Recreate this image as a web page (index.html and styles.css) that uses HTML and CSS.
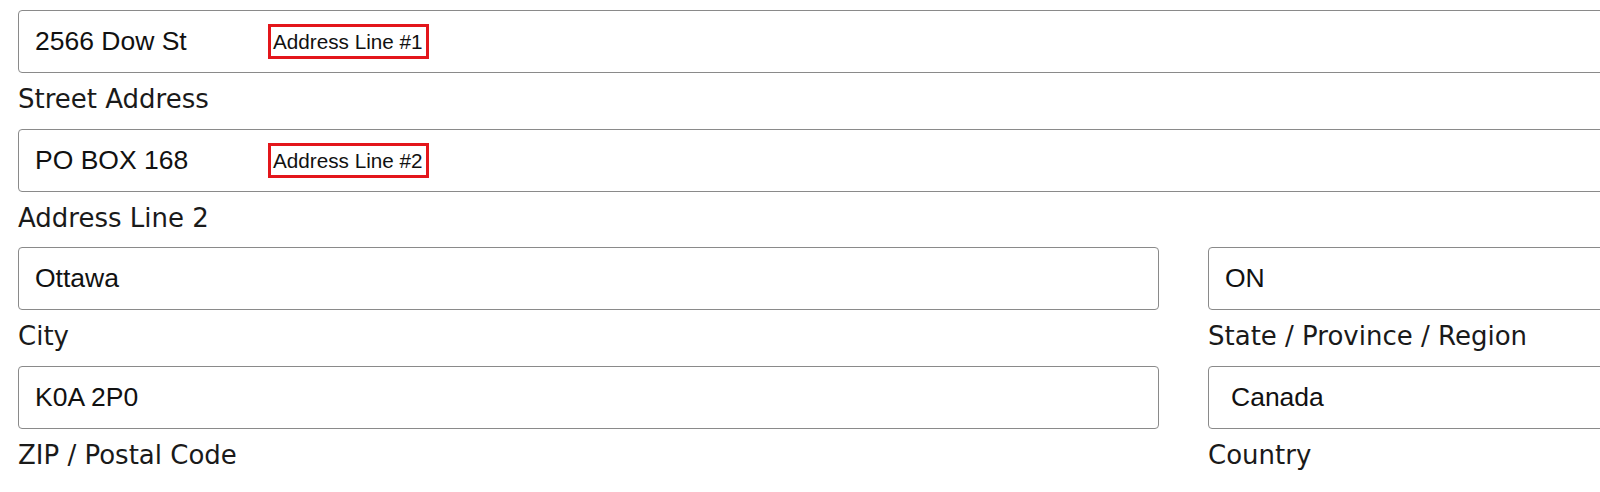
FILE: index.html
```html
<!DOCTYPE html>
<html lang="en">
<head>
<meta charset="utf-8">
<title>Address</title>
<link rel="stylesheet" href="styles.css">
</head>
<body>
<form class="address">
  <div class="field span2">
    <div class="input"><span class="value">2566 Dow St</span><span class="note">Address Line #1</span></div>
    <label class="label">Street Address</label>
  </div>
  <div class="field span2">
    <div class="input"><span class="value">PO BOX 168</span><span class="note">Address Line #2</span></div>
    <label class="label">Address Line 2</label>
  </div>
  <div class="field">
    <div class="input"><span class="value">Ottawa</span></div>
    <label class="label">City</label>
  </div>
  <div class="field">
    <div class="input"><span class="value">ON</span></div>
    <label class="label">State / Province / Region</label>
  </div>
  <div class="field">
    <div class="input"><span class="value">K0A 2P0</span></div>
    <label class="label">ZIP / Postal Code</label>
  </div>
  <div class="field">
    <div class="input select"><span class="value">Canada</span></div>
    <label class="label">Country</label>
  </div>
</form>
</body>
</html>
```
FILE: styles.css
```css
html, body {
  margin: 0;
  padding: 0;
  background: #ffffff;
  overflow: hidden;
}
.address {
  display: grid;
  grid-template-columns: 1141px 1141px;
  column-gap: 49px;
  padding: 10px 0 0 18px;
  width: 2331px;
}
.field {
  display: flex;
  flex-direction: column;
  height: 118.5px;
}
.span2 {
  grid-column: span 2;
}
.input {
  box-sizing: border-box;
  height: 63px;
  border: 1px solid #8a8a8a;
  border-radius: 4px;
  display: flex;
  align-items: center;
  padding: 0 16px;
  font-family: "Liberation Sans", Arial, sans-serif;
  font-size: 26.5px;
  color: #111;
}
.select {
  padding-left: 22px;
}
.value {
  flex: 0 0 auto;
}
.input .value:not(:only-child) {
  width: 233px;
}
.note {
  border: 3px solid #e3161b;
  padding: 3px 3px 3px 2px;
  font-size: 20.7px;
  line-height: 23px;
  color: #111;
}
.label {
  margin-top: 11px;
  font-family: "DejaVu Sans", Verdana, sans-serif;
  font-size: 26px;
  line-height: 30px;
  color: #1a1a1a;
}
```
